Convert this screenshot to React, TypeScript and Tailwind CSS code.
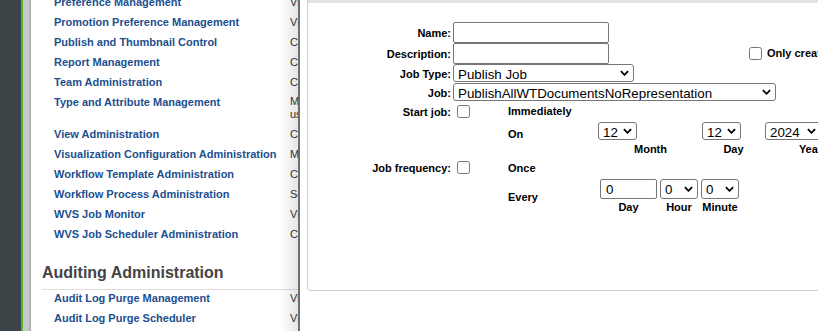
import React from "react";

interface AdminLink {
  name: string;
  desc: React.ReactNode;
  tall?: boolean;
}

const links: AdminLink[] = [
  { name: "Preference Management", desc: "View and manage preferences" },
  { name: "Promotion Preference Management", desc: "View and manage promotion preferences" },
  { name: "Publish and Thumbnail Control", desc: "Control publishing and thumbnails" },
  { name: "Report Management", desc: "Create and manage report templates" },
  { name: "Team Administration", desc: "Create and manage team templates" },
  {
    name: "Type and Attribute Management",
    desc: (
      <>
        Manage types and attributes
        <br />
        used in the system
      </>
    ),
    tall: true,
  },
  { name: "View Administration", desc: "Create and manage table views" },
  { name: "Visualization Configuration Administration", desc: "Manage visualization configuration" },
  { name: "Workflow Template Administration", desc: "Create and manage workflow templates" },
  { name: "Workflow Process Administration", desc: "Search and manage workflow processes" },
  { name: "WVS Job Monitor", desc: "View visualization jobs" },
  { name: "WVS Job Scheduler Administration", desc: "Create and schedule publish jobs" },
];

const auditLinks: AdminLink[] = [
  { name: "Audit Log Purge Management", desc: "View and purge audit log records" },
  { name: "Audit Log Purge Scheduler", desc: "View and schedule audit log purges" },
];

function Chevron() {
  return (
    <svg viewBox="0 0 10 6" className="h-[6px] w-[9px]" fill="none" stroke="black" strokeWidth="2">
      <path d="M1 1l4 4 4-4" />
    </svg>
  );
}

function Select({ value, className }: { value: string; className: string }) {
  return (
    <div className={`relative shrink-0 ${className}`}>
      <select
        defaultValue={value}
        className="h-full w-full appearance-none rounded-[3px] border border-[#767676] bg-white pl-[4px] text-[13.33px] font-normal text-black outline-none"
      >
        <option value={value}>{value}</option>
      </select>
      <span className="pointer-events-none absolute right-[5px] top-1/2 flex -translate-y-1/2">
        <Chevron />
      </span>
    </div>
  );
}

function TextInput({ value, className }: { value?: string; className: string }) {
  return (
    <input
      type="text"
      defaultValue={value}
      className={`shrink-0 rounded-[2px] border border-[#767676] bg-white px-[5px] text-[13.33px] font-normal text-black outline-none ${className}`}
    />
  );
}

function Check() {
  return <input type="checkbox" className="m-0 h-[13px] w-[13px] shrink-0" />;
}

function LinkRow({ item }: { item: AdminLink }) {
  return (
    <div className={`flex pl-[12px] ${item.tall ? "h-[32px] items-start pt-[3px]" : "h-[20px] items-center"}`}>
      <span className="w-[236px] shrink-0 whitespace-nowrap text-[11px] font-bold leading-[14px] text-[#1c4f8f]">
        {item.name}
      </span>
      <span className="whitespace-nowrap text-[11px] leading-[13px] text-[#333]">{item.desc}</span>
    </div>
  );
}

function PageContent() {
  return (
    <div className="mt-[-8px] flex min-w-0 flex-1 flex-col pl-[11px]">
      {links.map((item) => (
        <LinkRow key={item.name} item={item} />
      ))}

      {/* Auditing section */}
      <h2 className="mt-[19px] border-b border-[#dcdcdc] pb-[6px] text-[16px] font-bold leading-[20px] text-[#444]">
        Auditing Administration
      </h2>
      <div className="mt-[-2px]">
        {auditLinks.map((item) => (
          <LinkRow key={item.name} item={item} />
        ))}
      </div>
    </div>
  );
}

function Label({ text, className }: { text: string; className: string }) {
  return (
    <div className={`flex w-[143px] shrink-0 items-center justify-end text-[11px] font-bold text-black ${className}`}>
      {text}
    </div>
  );
}

function SchedulerForm() {
  return (
    <div className="flex flex-col pt-[19px] text-[11px] text-black">
      {/* Name */}
      <div className="flex h-[21px] items-center">
        <Label text="Name:" className="h-[21px] pt-[1px]" />
        <TextInput className="ml-[2px] h-[21px] w-[156px]" />
      </div>

      {/* Description */}
      <div className="flex h-[21px] items-center">
        <Label text="Description:" className="h-[21px] pt-[1px]" />
        <TextInput className="ml-[2px] h-[21px] w-[156px]" />
        <div className="ml-[140px] flex items-center">
          <Check />
          <span className="ml-[5px] whitespace-nowrap font-bold">Only create new representations</span>
        </div>
      </div>

      {/* Job Type */}
      <div className="flex h-[19px] items-start">
        <Label text="Job Type:" className="h-[19px] pt-[1px]" />
        <Select value="Publish Job" className="ml-[2px] h-[18px] w-[181px]" />
      </div>

      {/* Job */}
      <div className="flex h-[19px] items-start">
        <Label text="Job:" className="h-[19px] pt-[1px]" />
        <Select value="PublishAllWTDocumentsNoRepresentation" className="ml-[2px] h-[18px] w-[323px]" />
      </div>

      {/* Start job */}
      <div className="flex items-start">
        <Label text="Start job:" className="h-[19px] pt-[1px]" />
        <div className="ml-[2px] flex h-[19px] w-[55px] shrink-0 items-center pl-[4px]">
          <Check />
        </div>
        <div className="flex flex-col font-bold">
          <div className="flex h-[19px] items-center">Immediately</div>
          <div className="flex">
            <div className="flex h-[26px] w-[90px] shrink-0 items-center">On</div>
            <div className="flex flex-col">
              <div className="mt-[1px] flex h-[18px]">
                <Select value="12" className="h-[18px] w-[39px]" />
                <Select value="12" className="ml-[65px] h-[18px] w-[39px]" />
                <Select value="2024" className="ml-[24px] h-[18px] w-[56px]" />
              </div>
              <div className="mt-[1px] flex h-[16px] items-center">
                <span className="ml-[22px] w-[61px] shrink-0 text-center">Month</span>
                <span className="ml-[32px] w-[41px] shrink-0 text-center">Day</span>
                <span className="ml-[36px] w-[41px] shrink-0 text-center">Year</span>
              </div>
            </div>
          </div>
        </div>
      </div>

      {/* Job frequency */}
      <div className="flex items-start">
        <Label text="Job frequency:" className="h-[21px] pt-[1px]" />
        <div className="ml-[2px] flex h-[21px] w-[55px] shrink-0 items-center pl-[4px]">
          <Check />
        </div>
        <div className="flex flex-col font-bold">
          <div className="flex h-[21px] items-center pt-[1px]">Once</div>
          <div className="flex">
            <div className="flex h-[38px] w-[92px] shrink-0 items-center">Every</div>
            <div className="flex flex-col">
              <div className="mt-[1px] flex h-[20px]">
                <TextInput value="0" className="h-[20px] w-[57px]" />
                <Select value="0" className="ml-[3px] h-[20px] w-[38px]" />
                <Select value="0" className="ml-[3px] h-[20px] w-[38px]" />
              </div>
              <div className="flex h-[16px] items-center">
                <span className="w-[57px] shrink-0 text-center">Day</span>
                <span className="ml-[3px] w-[38px] shrink-0 text-center">Hour</span>
                <span className="ml-[3px] w-[38px] shrink-0 whitespace-nowrap text-center">Minute</span>
              </div>
            </div>
          </div>
        </div>
      </div>
    </div>
  );
}

function Dialog() {
  return (
    <div className="absolute bottom-0 left-[298px] right-0 top-0 border-l-2 border-[#6f6f6f] bg-white pl-[7px]">
      {/* drop shadow over the page */}
      <div className="absolute bottom-0 left-[-20px] top-0 w-[18px] bg-linear-to-r from-transparent to-black/10" />
      <div className="h-[291px] overflow-hidden rounded-bl-[4px] border-b border-l border-[#cfcfcf]">
        <div className="h-[3px] bg-[#e2e2e2]" />
        <SchedulerForm />
      </div>
    </div>
  );
}

export default function App() {
  return (
    <div className="relative flex h-[331px] w-[818px] overflow-hidden bg-white font-['Liberation_Sans',Arial,sans-serif]">
      <div className="w-[21px] shrink-0 bg-[#3c4447]" />
      <div className="w-[2px] shrink-0 bg-[#5bb431]" />
      <div className="w-[6px] shrink-0 bg-[#c9c9c9]" />
      <div className="w-[2px] shrink-0 bg-[#b3b3b3]" />
      <PageContent />
      <Dialog />
    </div>
  );
}
